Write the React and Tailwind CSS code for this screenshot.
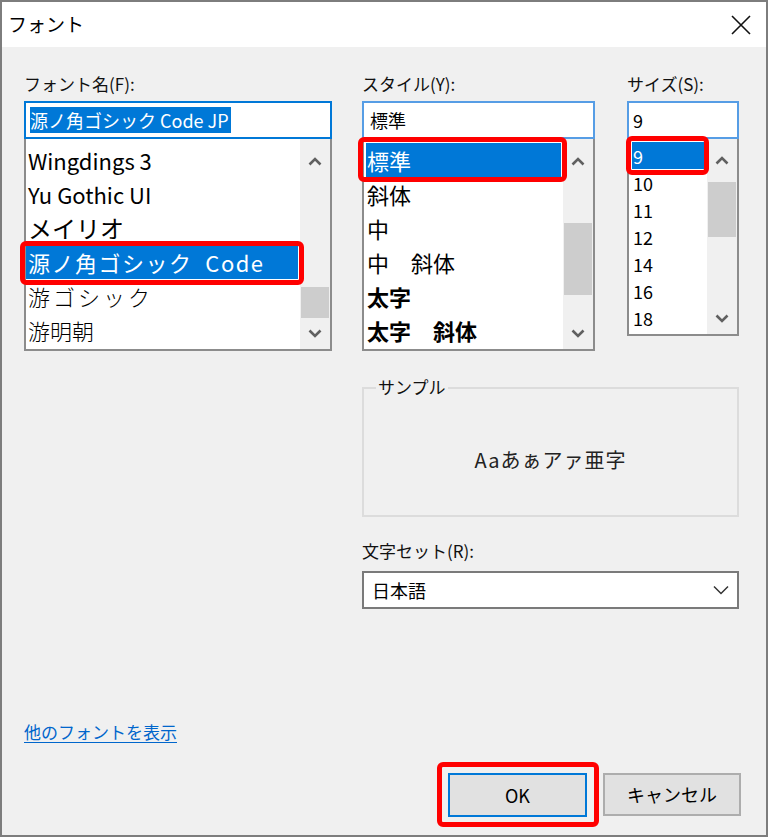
import React from "react";

const FONT = "font-['Noto_Sans_CJK_JP','Noto_Sans',sans-serif]";

function Up() {
  return (
    <svg width="14" height="9" viewBox="0 0 14 9">
      <polyline points="1.5,7.5 7,2 12.5,7.5" fill="none" stroke="#606060" strokeWidth="2.6" />
    </svg>
  );
}

function Down() {
  return (
    <svg width="14" height="9" viewBox="0 0 14 9">
      <polyline points="1.5,1.5 7,7 12.5,1.5" fill="none" stroke="#606060" strokeWidth="2.6" />
    </svg>
  );
}

function ScrollBar({ upH, downH, thumbTop, thumbH }) {
  return (
    <div className="w-[30px] flex flex-col bg-[#f0f0f0]">
      <div className="flex items-center justify-center" style={{ height: upH }}>
        <Up />
      </div>
      <div className="flex-1 px-[1px]">
        <div className="bg-[#cdcdcd]" style={{ marginTop: thumbTop, height: thumbH }}></div>
      </div>
      <div className="flex items-center justify-center" style={{ height: downH }}>
        <Down />
      </div>
    </div>
  );
}

function RedBox({ className }) {
  return (
    <div
      className={`absolute border-[5px] border-[#ff0000] rounded-[6px] pointer-events-none ${className}`}
    ></div>
  );
}

function Label({ children }) {
  return (
    <div className="h-[28px] mb-[4px] flex items-center text-[17px] text-[#111] leading-none">
      {children}
    </div>
  );
}

export default function App() {
  const fonts = [
    { name: "Wingdings 3" },
    { name: "Yu Gothic UI" },
    { name: "メイリオ", cls: "text-[24px]" },
    { name: "源ノ角ゴシック  Code", sel: true, cls: "tracking-[1.5px]" },
    { name: "游ゴシック", cls: "text-[#666] tracking-[3px] font-light" },
    { name: "游明朝", cls: "text-[#555] font-light" },
  ];
  const styles = [
    { name: "標準", sel: true },
    { name: "斜体" },
    { name: "中" },
    { name: "中　斜体" },
    { name: "太字", cls: "font-bold" },
    { name: "太字　斜体", cls: "font-bold" },
  ];
  const sizes = ["9", "10", "11", "12", "14", "16", "18"];

  return (
    <div className={`w-[768px] h-[839px] bg-white ${FONT}`}>
      <div className="w-[768px] h-[837px] border-2 border-[#7d7d7d] flex flex-col bg-[#f0f0f0]">
        {/* title bar */}
        <div className="h-[45px] bg-white flex items-center justify-between">
          <span className="pl-[6px] text-[19px] text-black">フォント</span>
          <svg width="22" height="22" viewBox="0 0 22 22" className="mr-[14px]">
            <path d="M2 2 L20 20 M20 2 L2 20" stroke="#111" strokeWidth="1.6" />
          </svg>
        </div>

        {/* body */}
        <div className="flex-1 flex flex-col pt-[22px] pl-[22px] pr-[27px]">
          <div className="flex">
            {/* font name column */}
            <div className="w-[308px] flex flex-col">
              <Label>フォント名(F):</Label>
              <div className="h-[38px] border-2 border-[#0078d7] bg-white flex items-center pl-[4px]">
                <span className="bg-[#0078d7] text-white text-[18px] leading-[26px] pr-[2px]">
                  源ノ角ゴシック Code JP
                </span>
              </div>
              <div className="h-[212px] border-2 border-t-0 border-[#8c8c8c] bg-white flex">
                <div className="flex-1 pt-[4px] pr-[2px] pl-[0px]">
                  {fonts.map((f) => (
                    <div
                      key={f.name}
                      className={`relative h-[34px] flex items-center pl-[2px] text-[22px] leading-none whitespace-pre ${
                        f.sel ? "bg-[#0078d7] text-white" : "text-black"
                      } ${f.cls || ""}`}
                    >
                      {f.name}
                      {f.sel && <RedBox className="-left-[6px] -right-[6px] -top-[4px] -bottom-[6px]" />}
                    </div>
                  ))}
                </div>
                <ScrollBar upH={44} downH={31} thumbTop={104} thumbH={31} />
              </div>
            </div>

            {/* right area */}
            <div className="ml-[30px] w-[377px] flex flex-col">
              <div className="flex gap-[32px]">
                {/* style column */}
                <div className="w-[233px] flex flex-col">
                  <Label>スタイル(Y):</Label>
                  <div className="h-[38px] border-2 border-[#569de5] bg-white flex items-center pl-[6px] text-[18px] text-black">
                    標準
                  </div>
                  <div className="h-[212px] border-2 border-t-0 border-[#8c8c8c] bg-white flex">
                    <div className="flex-1 pt-[4px] pl-[2px] pr-[2px]">
                      {styles.map((s) => (
                        <div
                          key={s.name}
                          className={`relative h-[34px] flex items-center pl-[1px] text-[22px] leading-none ${
                            s.sel ? "bg-[#0078d7] text-white" : "text-black"
                          } ${s.cls || ""}`}
                        >
                          {s.name}
                          {s.sel && <RedBox className="-left-[8px] -right-[6px] -top-[6px] -bottom-[5px]" />}
                        </div>
                      ))}
                    </div>
                    <ScrollBar upH={44} downH={31} thumbTop={40} thumbH={72} />
                  </div>
                </div>

                {/* size column */}
                <div className="w-[112px] flex flex-col">
                  <Label>サイズ(S):</Label>
                  <div className="h-[38px] border-2 border-[#569de5] bg-white flex items-center pl-[4px] text-[18px] text-black">
                    9
                  </div>
                  <div className="h-[197px] border-2 border-t-0 border-[#8c8c8c] bg-white flex">
                    <div className="flex-1 pt-[3px] pl-[3px] pr-[3px]">
                      {sizes.map((n) => (
                        <div
                          key={n}
                          className={`relative h-[27px] flex items-center pl-[1px] text-[18px] leading-none ${
                            n === "9" ? "bg-[#0078d7] text-white" : "text-black"
                          }`}
                        >
                          {n}
                          {n === "9" && <RedBox className="-left-[6px] -right-[5px] -top-[6px] -bottom-[6px]" />}
                        </div>
                      ))}
                    </div>
                    <ScrollBar upH={42} downH={32} thumbTop={1} thumbH={55} />
                  </div>
                </div>
              </div>

              {/* sample */}
              <div className="relative mt-[36px] h-[130px] border-2 border-[#dcdcdc] flex items-center justify-center">
                <span className="absolute -top-[13px] left-[12px] bg-[#f0f0f0] px-[2px] text-[17px] leading-[22px] text-[#111]">
                  サンプル
                </span>
                <span className="text-[20px] tracking-[1px] text-[#222] mt-[16px]">Aaあぁアァ亜字</span>
              </div>

              {/* charset */}
              <div className="mt-[19px]">
                <Label>文字セット(R):</Label>
              </div>
              <div className="mt-[3px] h-[38px] border-2 border-[#7a7a7a] bg-white flex items-center justify-between pl-[8px] pr-[8px]">
                <span className="text-[18px] text-black">日本語</span>
                <svg width="16" height="10" viewBox="0 0 16 10">
                  <polyline points="1,1.5 8,8.5 15,1.5" fill="none" stroke="#333" strokeWidth="1.5" />
                </svg>
              </div>
            </div>
          </div>

          {/* link */}
          <div className="mt-[111px] h-[24px] flex items-center">
            <span className="text-[17px] text-[#0066cc] underline underline-offset-[3px]">他のフォントを表示</span>
          </div>

          {/* buttons */}
          <div className="mt-[29px] flex justify-end gap-[16px] -mr-[2px]">
            <div className="relative">
              <button className="w-[139px] h-[44px] border-2 border-[#0078d7] bg-[#e1e1e1] text-[18px] text-black">
                OK
              </button>
              <RedBox className="-left-[11px] -right-[12px] -top-[11px] -bottom-[10px]" />
            </div>
            <button className="w-[138px] h-[43px] border-2 border-[#adadad] bg-[#e1e1e1] text-[18px] text-black">
              キャンセル
            </button>
          </div>
        </div>
      </div>
    </div>
  );
}
